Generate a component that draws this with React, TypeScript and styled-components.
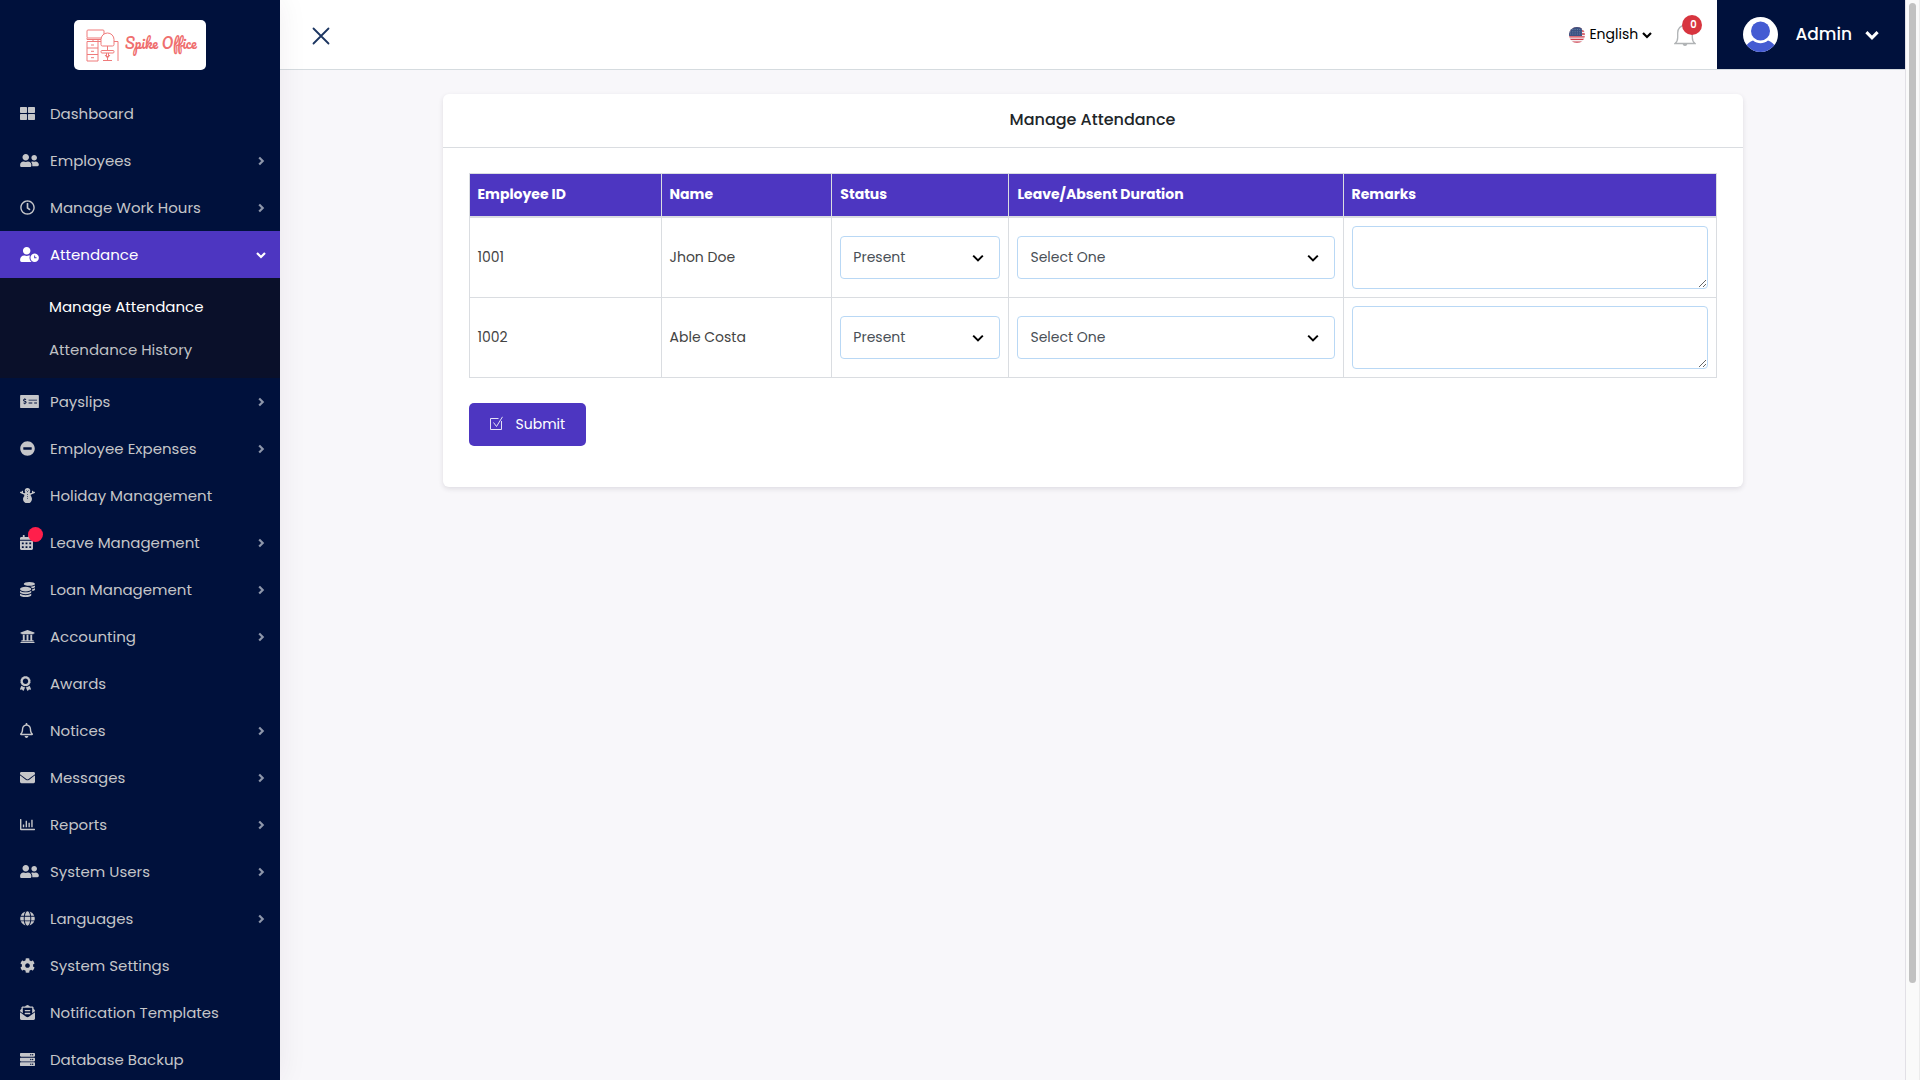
import React from "react";
import styled, { createGlobalStyle, css } from "styled-components";
import type { IconType } from "react-icons";
import {
  FaThLarge,
  FaUserFriends,
  FaRegClock,
  FaUserClock,
  FaMoneyCheckAlt,
  FaMinusCircle,
  FaSnowman,
  FaCalendarAlt,
  FaCoins,
  FaUniversity,
  FaAward,
  FaRegBell,
  FaEnvelope,
  FaRegChartBar,
  FaGlobe,
  FaCog,
  FaEnvelopeOpenText,
  FaServer,
} from "react-icons/fa";

const navy = "#00113c";
const purple = "#4d36c1";
const line = "#dadde1";
const fieldLine = "#b9d8f5";
const font = `Poppins, Inter, "Open Sans", sans-serif`;

const GlobalStyle = createGlobalStyle`
  *, *::before, *::after { box-sizing: border-box; }
  body { margin: 0; background: #f8f7fa; font-family: ${font}; }
  button, select, textarea { font-family: inherit; }
`;

const Page = styled.div`
  display: flex;
  height: 100vh;
  overflow: hidden;
  background: #f8f7fa;
`;

/* ---------- sidebar ---------- */

const Sidebar = styled.aside`
  flex: 0 0 280px;
  overflow: hidden;
  background: ${navy};
  z-index: 1;
`;

const SidebarFrame = styled.div`
  flex: 0 0 280px;
  display: flex;
  z-index: 1;
  box-shadow: 0 0 28px rgba(60, 20, 60, 0.07);
`;

const Brand = styled.a`
  display: flex;
  align-items: center;
  gap: 6px;
  width: 132px;
  height: 50px;
  margin: 20px auto;
  padding: 0 10px 0 12px;
  border-radius: 5px;
  background: #fff;
  color: #ef6f6f;
  text-decoration: none;
  white-space: nowrap;
  font-family: Pacifico, "Liberation Serif", cursive;
  font-size: 14px;
  font-weight: 400;
  line-height: 20px;

  svg {
    flex: none;
  }
`;

const BrandName = styled.span`
  padding-bottom: 4px;
`;

const NavList = styled.ul`
  margin: 0;
  padding: 0;
  list-style: none;
`;

const NavLink = styled.a<{ $active?: boolean }>`
  display: grid;
  grid-template-columns: 30px 1fr 10px;
  align-items: center;
  height: 47px;
  padding: 0 14px 0 20px;
  font-size: 15px;
  line-height: 24px;
  white-space: nowrap;
  text-decoration: none;
  color: ${(p) => (p.$active ? "#fff" : "#c5c6c9")};
  background: ${(p) => (p.$active ? purple : "transparent")};
`;

const NavIcon = styled.span<{ $width: number }>`
  position: relative;
  display: flex;
  width: 30px;

  svg {
    width: ${(p) => p.$width}px;
    height: 15px;
  }
`;

const Dot = styled.i`
  position: absolute;
  left: 8px;
  top: -8px;
  width: 15px;
  height: 15px;
  border-radius: 50%;
  background: #ff1f4b;
`;

const SubNav = styled(NavList)`
  padding: 7px 0;
  background: #0a102a;
`;

const SubLink = styled.a<{ $active?: boolean }>`
  display: flex;
  align-items: center;
  height: 43px;
  padding-left: 49px;
  font-size: 15px;
  line-height: 24px;
  text-decoration: none;
  color: ${(p) => (p.$active ? "#fff" : "#bfc0c4")};
`;

/* ---------- top bar ---------- */

const Main = styled.div`
  flex: 1;
  min-width: 0;
  display: flex;
  flex-direction: column;
`;

const TopBar = styled.header`
  display: flex;
  align-items: stretch;
  height: 70px;
  background: #fff;
  border-bottom: 1px solid #d5dbdf;
`;

const PlainButton = styled.button`
  display: flex;
  align-items: center;
  padding: 0;
  border: 0;
  background: none;
  cursor: pointer;
`;

const CloseButton = styled(PlainButton)`
  margin: 3px auto 0 32px;
`;

const Language = styled.label`
  display: flex;
  align-items: center;
  gap: 4px;
  margin-right: 22px;
`;

const LanguageSelect = styled.select`
  appearance: none;
  padding: 0 0 2px;
  border: 0;
  background: none;
  color: #000;
  font-size: 14px;
  line-height: 20px;
`;

const Bell = styled(PlainButton)`
  position: relative;
  margin-right: 21px;
`;

const Badge = styled.span`
  position: absolute;
  left: 8px;
  top: 15px;
  width: 20px;
  height: 20px;
  padding-left: 2px;
  border-radius: 50%;
  background: #d7353f;
  color: #fff;
  font-size: 10px;
  font-weight: 600;
  line-height: 19px;
  text-align: center;
`;

const Account = styled(PlainButton)`
  gap: 13px;
  padding: 0 26px;
  background: ${navy};
  color: #fff;
  font-size: 17px;
  font-weight: 500;
  line-height: 24px;
`;

const AccountName = styled.span`
  padding: 0 0 2px 4px;
`;

/* ---------- content ---------- */

const Content = styled.main`
  padding: 24px 10%;
`;

const Card = styled.section`
  border-radius: 6px;
  background: #fff;
  box-shadow: 0 2px 5px rgba(40, 30, 60, 0.12);
`;

const CardTitle = styled.h1`
  margin: 0;
  padding: 14px 0 15px;
  border-bottom: 1px solid ${line};
  color: #212529;
  font-size: 16px;
  font-weight: 500;
  line-height: 24px;
  text-align: center;
`;

const CardBody = styled.form`
  padding: 25px 26px 41px;
`;

const Table = styled.table`
  width: 100%;
  margin-bottom: 25px;
  border-collapse: collapse;
  table-layout: fixed;
  font-size: 14px;
  line-height: 21px;
`;

const HeadCell = styled.th<{ $share: number }>`
  width: ${(p) => p.$share}%;
  padding: 10px 8px 11px;
  border: 1px solid ${line};
  border-bottom-width: 2px;
  background: ${purple};
  color: #fff;
  font-weight: 700;
  text-align: left;
`;

const Cell = styled.td`
  padding: 8px;
  border: 1px solid ${line};
  color: #444;
`;

const field = css`
  display: block;
  width: 100%;
  border: 1px solid ${fieldLine};
  border-radius: 4px;
  background: #fff;
  color: #495057;
  font-size: 14px;
  line-height: 21px;
`;

const SelectBox = styled.div`
  position: relative;

  svg {
    position: absolute;
    right: 16px;
    top: 16px;
    pointer-events: none;
  }
`;

const Select = styled.select`
  ${field}
  appearance: none;
  height: 43px;
  padding: 0 12px;
`;

const Remarks = styled.textarea`
  ${field}
  height: 63px;
  padding: 6px 12px;
  resize: vertical;
`;

const Submit = styled.button`
  display: flex;
  align-items: center;
  gap: 13px;
  height: 43px;
  padding: 0 21px;
  border: 0;
  border-radius: 5px;
  background: ${purple};
  color: #fff;
  font-size: 14px;
  line-height: 21px;

  svg {
    margin-bottom: 3px;
  }
`;

const ScrollTrack = styled.div`
  flex: 0 0 15px;
  padding: 3px 3px 0;
  border-left: 1px solid #e2e0e6;
  border-right: 1px solid #ececec;
  background: #fafafa;
`;

const ScrollThumb = styled.div`
  height: 91%;
  border-radius: 4px;
  background: #c1c1c1;
`;

/* ---------- drawings ---------- */

const Chevron = ({
  size = 10,
  weight = 2.2,
  color = "currentColor",
  right = false,
}: {
  size?: number;
  weight?: number;
  color?: string;
  right?: boolean;
}) => (
  <svg width={size} height={size} viewBox="0 0 10 10" fill="none" stroke={color} strokeWidth={weight} aria-hidden="true">
    <path d={right ? "M3.200 1.500l3.500 3.500-3.500 3.500" : "M1 3l4 4 4-4"} />
  </svg>
);

const DeskDrawing = () => (
  <svg width="33" height="33" viewBox="0 0 33 33" fill="none" stroke="#ef7b7b" strokeWidth="1" aria-hidden="true">
    <rect x="1" y="1" width="17" height="8" rx="1" />
    <path d="M1 9v1.500h15M7 10.500v2M12 10.500v2M1 12.500h14M28 12.500h4V32" />
    <path d="M1 12.500V32h11V12.500M1 19h11M1 25.500h11M5 16h3M5 22.300h3M5 28.700h3" />
    <path d="M15 15.500v-5a6.500 6.500 0 0 1 13 0v5q0 1.500-1.500 1.500h-10q-1.500 0-1.500-1.500z" fill="#fff" />
    <path d="M21.500 17v4.500" />
    <rect x="15" y="21.500" width="13" height="2.500" rx="1" />
    <path d="M20.500 24v4M22.500 24v4M17 31.500h9M21.500 27v4.500M19 26l2.500 3 2.500-3" />
  </svg>
);

const CloseDrawing = () => (
  <svg width="18" height="18" viewBox="0 0 18 18" stroke="#1c3561" strokeWidth="1.800" strokeLinecap="round" aria-hidden="true">
    <path d="M1.500 1.500l15 15M16.500 1.500l-15 15" />
  </svg>
);

const Flag = () => (
  <svg width="16" height="16" viewBox="0 0 16 16" aria-hidden="true">
    <clipPath id="flag-round">
      <circle cx="8" cy="8" r="8" />
    </clipPath>
    <g clipPath="url(#flag-round)">
      <rect width="16" height="16" fill="#f4f0f2" />
      <path d="M0 1h16M0 4h16M0 7h16M0 9.800h16M0 12.400h16M0 15.200h16" stroke="#cf3f4c" strokeWidth="1.300" />
      <rect width="13" height="9" fill="#3a5282" />
      <path d="M1 2.500h12M1 4.800h12M1 7h12" stroke="#8494b4" strokeWidth=".7" strokeDasharray="1 1.300" />
    </g>
  </svg>
);

const BellDrawing = () => (
  <svg width="22" height="24" viewBox="0 0 22 24" fill="none" stroke="#b0b3b5" strokeWidth="1.300" aria-hidden="true">
    <path d="M1 20.500c2-1.600 2.700-3 2.700-6V10C3.700 5.500 6.500 2.500 11 2.500s7.300 3 7.300 7.500v4.500c0 3 .7 4.400 2.700 6z" />
    <path d="M9.300 21c.2 1.800 3.200 1.800 3.400 0" fill="#b0b3b5" />
  </svg>
);

const Avatar = () => (
  <svg width="35" height="35" viewBox="0 0 35 35" aria-hidden="true">
    <clipPath id="avatar-round">
      <circle cx="17.500" cy="17.500" r="17.500" />
    </clipPath>
    <g clipPath="url(#avatar-round)">
      <rect width="35" height="35" fill="#fff" />
      <circle cx="17.500" cy="14" r="9.500" fill="#445bd2" />
      <path d="M2 31c2-4.500 5-6.500 8-7.500 4.500 3.500 10.500 3.500 15 0 3 1 6 3 8 7.500v6H2z" fill="#445bd2" />
    </g>
  </svg>
);

const CheckDrawing = () => (
  <svg width="13" height="15" viewBox="0 0 13 15" fill="none" stroke="#fff" strokeWidth="1" opacity=".85" aria-hidden="true">
    <path d="M8.500 2.500h-8v11h11V5" />
    <path d="M3.500 6.500l3 4L12.500.8" />
  </svg>
);

/* ---------- data ---------- */

type NavItem = {
  label: string;
  icon: IconType;
  iconWidth?: number;
  more?: boolean;
  dot?: boolean;
  children?: string[];
};

const nav: NavItem[] = [
  { label: "Dashboard", icon: FaThLarge },
  { label: "Employees", icon: FaUserFriends, iconWidth: 19, more: true },
  { label: "Manage Work Hours", icon: FaRegClock, more: true },
  {
    label: "Attendance",
    icon: FaUserClock,
    iconWidth: 19,
    more: true,
    children: ["Manage Attendance", "Attendance History"],
  },
  { label: "Payslips", icon: FaMoneyCheckAlt, iconWidth: 19, more: true },
  { label: "Employee Expenses", icon: FaMinusCircle, more: true },
  { label: "Holiday Management", icon: FaSnowman },
  { label: "Leave Management", icon: FaCalendarAlt, iconWidth: 13, more: true, dot: true },
  { label: "Loan Management", icon: FaCoins, more: true },
  { label: "Accounting", icon: FaUniversity, more: true },
  { label: "Awards", icon: FaAward, iconWidth: 11 },
  { label: "Notices", icon: FaRegBell, iconWidth: 13, more: true },
  { label: "Messages", icon: FaEnvelope, more: true },
  { label: "Reports", icon: FaRegChartBar, more: true },
  { label: "System Users", icon: FaUserFriends, iconWidth: 19, more: true },
  { label: "Languages", icon: FaGlobe, more: true },
  { label: "System Settings", icon: FaCog },
  { label: "Notification Templates", icon: FaEnvelopeOpenText },
  { label: "Database Backup", icon: FaServer },
];

const columns: [string, number][] = [
  ["Employee ID", 15.4],
  ["Name", 13.7],
  ["Status", 14.2],
  ["Leave/Absent Duration", 26.8],
  ["Remarks", 29.9],
];

const employees = [
  { id: "1001", name: "Jhon Doe" },
  { id: "1002", name: "Able Costa" },
];

const SelectField = ({ label, value }: { label: string; value: string }) => (
  <SelectBox>
    <Select aria-label={label} defaultValue={value}>
      <option>{value}</option>
    </Select>
    <Chevron size={12} weight={1.7} color="#000" />
  </SelectBox>
);

export default function App() {
  return (
    <>
      <GlobalStyle />
      <Page>
        <SidebarFrame>
          <Sidebar>
            <Brand href="#">
              <DeskDrawing />
              <BrandName>Spike Office</BrandName>
            </Brand>
            <nav>
              <NavList>
                {nav.map(({ label, icon: Icon, iconWidth = 15, more, dot, children }) => (
                  <li key={label}>
                    <NavLink href="#" $active={!!children}>
                      <NavIcon $width={iconWidth}>
                        <Icon />
                        {dot && <Dot />}
                      </NavIcon>
                      {label}
                      {more && <Chevron right={!children} color={children ? "#fff" : "#8e97ab"} />}
                    </NavLink>
                    {children && (
                      <SubNav>
                        {children.map((child, i) => (
                          <li key={child}>
                            <SubLink href="#" $active={i === 0}>
                              {child}
                            </SubLink>
                          </li>
                        ))}
                      </SubNav>
                    )}
                  </li>
                ))}
              </NavList>
            </nav>
          </Sidebar>
        </SidebarFrame>

        <Main>
          <TopBar>
            <CloseButton type="button" aria-label="Close menu">
              <CloseDrawing />
            </CloseButton>
            <Language>
              <Flag />
              <LanguageSelect aria-label="Language" defaultValue="English">
                <option>English</option>
              </LanguageSelect>
              <Chevron color="#000" />
            </Language>
            <Bell type="button" aria-label="Notifications">
              <BellDrawing />
              <Badge>0</Badge>
            </Bell>
            <Account type="button">
              <Avatar />
              <AccountName>Admin</AccountName>
              <Chevron size={14} />
            </Account>
          </TopBar>

          <Content>
            <Card>
              <CardTitle>Manage Attendance</CardTitle>
              <CardBody>
                <Table>
                  <thead>
                    <tr>
                      {columns.map(([name, share]) => (
                        <HeadCell key={name} $share={share} scope="col">
                          {name}
                        </HeadCell>
                      ))}
                    </tr>
                  </thead>
                  <tbody>
                    {employees.map(({ id, name }) => (
                      <tr key={id}>
                        <Cell>{id}</Cell>
                        <Cell>{name}</Cell>
                        <Cell>
                          <SelectField label={`Status of ${name}`} value="Present" />
                        </Cell>
                        <Cell>
                          <SelectField label={`Leave or absent duration of ${name}`} value="Select One" />
                        </Cell>
                        <Cell>
                          <Remarks aria-label={`Remarks for ${name}`} />
                        </Cell>
                      </tr>
                    ))}
                  </tbody>
                </Table>
                <Submit type="button">
                  <CheckDrawing />
                  Submit
                </Submit>
              </CardBody>
            </Card>
          </Content>
        </Main>

        <ScrollTrack>
          <ScrollThumb />
        </ScrollTrack>
      </Page>
    </>
  );
}
